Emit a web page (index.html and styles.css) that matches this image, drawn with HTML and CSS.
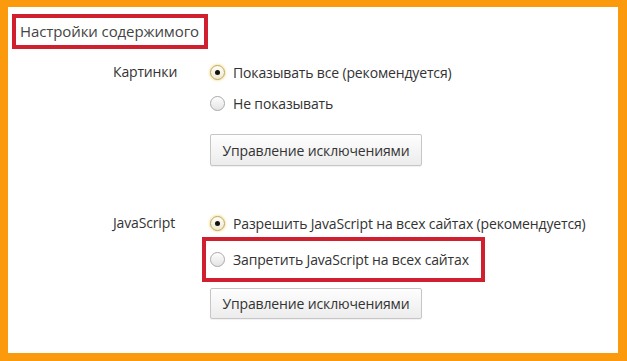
FILE: index.html
```html
<!DOCTYPE html>
<html lang="ru">
<head>
<meta charset="utf-8">
<link rel="stylesheet" href="styles.css">
</head>
<body>
<div class="panel">
  <div class="title-box">Настройки содержимого</div>
  <div class="section section-images">
    <div class="label">Картинки</div>
    <div class="controls">
      <div class="radio-row"><span class="radio checked"></span><span>Показывать все (рекомендуется)</span></div>
      <div class="radio-row"><span class="radio"></span><span>Не показывать</span></div>
      <button class="btn">Управление исключениями</button>
    </div>
  </div>
  <div class="section section-js">
    <div class="label">JavaScript</div>
    <div class="controls">
      <div class="radio-row row-short"><span class="radio checked"></span><span>Разрешить JavaScript на всех сайтах (рекомендуется)</span></div>
      <div class="highlight">
        <div class="radio-row"><span class="radio"></span><span>Запретить JavaScript на всех сайтах</span></div>
      </div>
      <button class="btn btn-js">Управление исключениями</button>
    </div>
  </div>
</div>
</body>
</html>
```
FILE: styles.css
```css
html, body {
  margin: 0;
  padding: 0;
}
body {
  background: #fb9a0c;
  width: 627px;
  height: 361px;
  padding: 7px 9px 8px 8px;
  box-sizing: border-box;
  font-family: "Open Sans", "Noto Sans", sans-serif;
  font-size: 14px;
  letter-spacing: -0.15px;
  color: #333;
}
.panel {
  background: #fff;
  height: 346px;
  padding-top: 7px;
  box-sizing: border-box;
}
.title-box {
  margin-left: 4px;
  width: 196px;
  height: 35px;
  box-sizing: border-box;
  border: 4px solid #d01f2f;
  padding-left: 4px;
  line-height: 26px;
  font-size: 15px;
  letter-spacing: -0.1px;
  color: #444;
  white-space: nowrap;
}
.section {
  display: grid;
  grid-template-columns: 97px auto;
  padding-left: 105px;
}
.section-images {
  margin-top: 8px;
}
.section-js {
  margin-top: 42px;
}
.label {
  line-height: 30px;
  height: 30px;
  color: #333;
}
.controls {
  display: flex;
  flex-direction: column;
  align-items: flex-start;
}
.radio-row {
  display: flex;
  align-items: center;
  height: 31px;
  gap: 8px;
  white-space: nowrap;
}
.row-short {
  height: 30px;
}
.radio {
  width: 13px;
  height: 13px;
  border-radius: 50%;
  border: 1px solid #a9a9a9;
  background: linear-gradient(#fdfdfd, #e4e4e4);
  box-shadow: inset 0 1px 1px rgba(255,255,255,0.8);
  display: flex;
  align-items: center;
  justify-content: center;
  flex: none;
}
.radio.checked {
  border-color: #b9a45c;
  box-shadow: 0 0 2px 1px rgba(245, 210, 90, 0.55);
  background: linear-gradient(#fffdf3, #efe9d4);
}
.radio.checked::after {
  content: "";
  width: 5px;
  height: 5px;
  border-radius: 50%;
  background: #111;
}
.highlight {
  margin-top: -1px;
  margin-left: -8px;
  width: 283px;
  height: 45px;
  box-sizing: border-box;
  border: 4px solid #d01f2f;
  padding: 3px 0 0 4px;
}
.btn {
  margin-top: 15px;
  height: 32px;
  width: 212px;
  padding: 0;
  font-family: inherit;
  font-size: 14px;
  letter-spacing: -0.15px;
  color: #333;
  border: 1px solid #c6c6c6;
  border-radius: 2px;
  background: linear-gradient(#fefefe, #ececec);
  box-shadow: 0 1px 1px rgba(0,0,0,0.06);
}
.btn-js {
  margin-top: 6px;
  height: 31px;
}
```
